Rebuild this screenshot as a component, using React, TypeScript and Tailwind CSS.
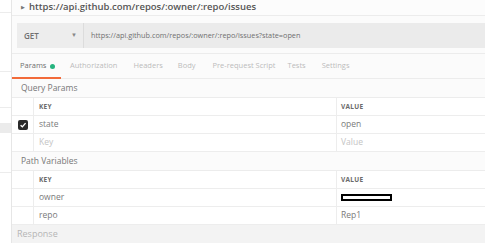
import React from 'react'

function Row({
  left,
  keyText,
  value,
  header,
  muted,
}: {
  left?: React.ReactNode
  keyText: React.ReactNode
  value: React.ReactNode
  header?: boolean
  muted?: boolean
}) {
  const txt = header
    ? 'text-[6.5px] font-bold tracking-[0.3px] text-[#6a6a6a]'
    : muted
      ? 'text-[8.5px] text-[#c4c4c4]'
      : 'text-[8.5px] text-[#7a7a7a]'
  return (
    <div className="flex h-[18px] border-b border-[#ededed]">
      <div className="w-[22px] flex items-center justify-center border-r border-[#ededed]">{left}</div>
      <div className={`w-[303px] flex items-center pl-[5px] border-r border-[#ededed] ${txt}`}>{keyText}</div>
      <div className={`flex-1 flex items-center pl-[4px] ${txt}`}>{value}</div>
    </div>
  )
}

function Checkbox() {
  return (
    <div className="w-[10px] h-[10px] rounded-[2px] bg-[#2a2a2a] flex items-center justify-center">
      <svg width="8" height="8" viewBox="0 0 10 10">
        <path d="M2 5.2 L4.2 7.3 L8.2 2.6" stroke="#fff" strokeWidth="1.7" fill="none" />
      </svg>
    </div>
  )
}

export default function App() {
  return (
    <div className="flex w-[485px] h-[243px] overflow-hidden bg-[#fbfbfb] font-['Open_Sans',sans-serif]">
      {/* sidebar sliver */}
      <div className="w-[12px] shrink-0 flex flex-col border-r border-[#e6e6e6] bg-white">
        <div className="h-[13px] border-b border-[#ececec]" />
        <div className="h-[59px] border-b border-[#ececec]" />
        <div className="h-[36px] border-b border-[#ececec]" />
        <div className="h-[15px]" />
        <div className="h-[10px] bg-[#ebebeb]" />
        <div className="h-[40px] border-b border-[#ececec]" />
        <div className="flex-1" />
      </div>

      <div className="flex-1 flex flex-col min-w-0">
        {/* title */}
        <div className="h-[16px] flex items-center pl-[9px] gap-[4px] border-b border-[#ececec] bg-[#fcfcfc]">
          <span className="text-[5px] text-[#777]">▶</span>
          <span className="text-[9.5px] font-semibold text-[#555]">https://api.github.com/repos/:owner/:repo/issues</span>
        </div>

        {/* request bar */}
        <div className="pt-[7px] pl-[5px] pb-[5px] border-b border-[#ececec]">
          <div className="h-[25px] flex bg-[#ebebeb] rounded-l-[2px]">
            <div className="w-[67px] flex items-center justify-between pl-[7px] pr-[6px] border-r border-[#dcdcdc] bg-[#ededed]">
              <span className="text-[8px] font-semibold text-[#707070]">GET</span>
              <span className="text-[6px] text-[#888]">▼</span>
            </div>
            <div className="flex items-center pl-[7px] text-[7.3px] text-[#707070]">
              https://api.github.com/repos/:owner/:repo/issues?state=open
            </div>
          </div>
        </div>

        {/* tabs */}
        <div className="h-[25px] flex items-center border-b border-[#ececec] text-[7.5px] text-[#bbbbbb]">
          <div className="relative h-full flex items-center pl-[8px] pr-[6px] w-[49px] text-[#707070]">
            Params
            <span className="ml-[4px] w-[5px] h-[5px] rounded-full bg-[#26b47f]" />
            <span className="absolute left-0 right-0 bottom-[-1px] h-[2px] bg-[#f26b3a]" />
          </div>
          <div className="flex items-center h-full">
            <span className="ml-[9px]">Authorization</span>
            <span className="ml-[16px]">Headers</span>
            <span className="ml-[15px]">Body</span>
            <span className="ml-[17px]">Pre-request Script</span>
            <span className="ml-[12px]">Tests</span>
            <span className="ml-[16px]">Settings</span>
          </div>
        </div>

        {/* query params */}
        <div className="h-[19px] flex items-center pl-[9px] border-b border-[#ececec] text-[8.5px] text-[#777]">
          Query Params
        </div>
        <div className="bg-white">
          <Row header keyText="KEY" value="VALUE" />
          <Row left={<Checkbox />} keyText="state" value="open" />
          <Row muted keyText="Key" value="Value" />
        </div>

        {/* path variables */}
        <div className="h-[19px] flex items-center pl-[9px] border-b border-[#ececec] text-[8.5px] text-[#777]">
          Path Variables
        </div>
        <div className="bg-white">
          <Row header keyText="KEY" value="VALUE" />
          <Row
            keyText="owner"
            value={<div className="w-[51px] h-[7px] border-[2px] border-black bg-white" />}
          />
          <Row keyText="repo" value="Rep1" />
        </div>

        {/* response */}
        <div className="flex-1 flex items-center pl-[5px] bg-[#f3f3f3] text-[9px] text-[#b5b5b5]">
          Response
        </div>
      </div>
    </div>
  )
}
